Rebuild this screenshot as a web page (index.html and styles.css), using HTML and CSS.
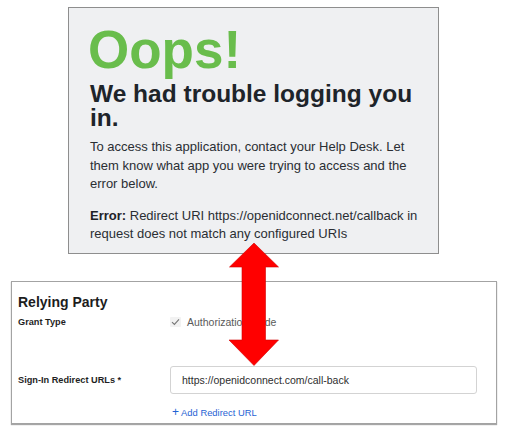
FILE: index.html
```html
<!DOCTYPE html>
<html lang="en">
<head>
<meta charset="utf-8">
<title>Redirect URI mismatch</title>
<link rel="stylesheet" href="styles.css">
</head>
<body>
<div class="page">
  <section class="error-box">
    <h1 class="oops">Oops!</h1>
    <h2 class="trouble">We had trouble logging you in.</h2>
    <p class="msg">To access this application, contact your Help Desk. Let them know what app you were trying to access and the error below.</p>
    <p class="msg err"><strong>Error:</strong> Redirect URI https://openidconnect.net/callback in request does not match any configured URIs</p>
  </section>

  <section class="panel">
    <h3 class="panel-title">Relying Party</h3>
    <div class="row row-grant">
      <div class="label">Grant Type</div>
      <div class="value check-value">
        <span class="checkbox"><svg width="9" height="8" viewBox="0 0 9 8"><path d="M1 4.2 L3.4 6.4 L8 1.4" fill="none" stroke="#777" stroke-width="1.1"/></svg></span>
        <span class="check-text">Authorization Code</span>
      </div>
    </div>
    <div class="row row-redirect">
      <div class="label">Sign-In Redirect URLs *</div>
      <div class="value"><div class="input">https://openidconnect.com/call-back</div></div>
    </div>
    <div class="row row-add">
      <div class="label"></div>
      <div class="value add-link"><span class="plus">+</span> Add Redirect URL</div>
    </div>
  </section>

  <svg class="arrow" width="512" height="439" viewBox="0 0 512 439">
    <polygon points="254,243 229.5,267 242,267 242,340 229,340 254,365.5 278.5,340 265.5,340 265.5,267 278.5,267" fill="#ff0000" stroke="#d00000" stroke-width="0.6"/>
  </svg>
</div>
</body>
</html>
```

FILE: styles.css
```css
html, body {
  margin: 0;
  padding: 0;
  background: #ffffff;
}

body {
  font-family: "Liberation Sans", Arial, Helvetica, sans-serif;
}

.page {
  position: relative;
  width: 512px;
  height: 439px;
  padding-top: 7px;
  box-sizing: border-box;
  overflow: hidden;
}

.error-box {
  margin-left: 68px;
  width: 371px;
  box-sizing: border-box;
  border: 1px solid #8e8e8e;
  background: #eff0f2;
  padding: 15px 14px 10px 21px;
}

.oops {
  margin: 0 0 6px -2px;
  font-size: 53px;
  line-height: 53px;
  font-weight: bold;
  color: #69bd4c;
}

.trouble {
  margin: 0 0 8.4px 0;
  font-size: 24.5px;
  line-height: 24px;
  font-weight: bold;
  color: #1e242a;
}

.msg {
  margin: 0;
  font-size: 13px;
  line-height: 18.3px;
  color: #2a2e33;
}

.msg.err {
  margin-top: 13.4px;
}

.msg strong {
  font-weight: bold;
  color: #1e2227;
}

.panel {
  margin: 27px 0 0 11px;
  width: 486px;
  box-sizing: border-box;
  border: 1px solid #a3a3a3;
  box-shadow: 0 1px 1px rgba(0, 0, 0, 0.35);
  background: #ffffff;
  padding: 12px 19px 5px 6px;
}

.panel-title {
  margin: 0 0 5px 0;
  font-size: 14px;
  line-height: 17px;
  font-weight: bold;
  color: #1d1d1d;
}

.row {
  display: flex;
  align-items: center;
}

.label {
  width: 152px;
  flex: none;
  font-size: 9.2px;
  font-weight: bold;
  color: #1f1f1f;
}

.value {
  flex: 1;
}

.row-grant {
  height: 12px;
}

.check-value {
  display: flex;
  align-items: center;
}

.checkbox {
  width: 11px;
  height: 10px;
  background: #f2f2f2;
  border-radius: 1px;
  display: flex;
  align-items: center;
  justify-content: center;
  margin-right: 6px;
}

.check-text {
  font-size: 10.5px;
  color: #5a5a5a;
}

.row-redirect {
  margin-top: 38px;
}

.input {
  height: 28px;
  box-sizing: border-box;
  border: 1px solid #d3d3d3;
  border-radius: 3px;
  padding-left: 11px;
  display: flex;
  align-items: center;
  font-size: 10.5px;
  color: #2e2e2e;
}

.row-add {
  margin-top: 12px;
  height: 12px;
}

.add-link {
  padding-left: 2px;
  font-size: 9.4px;
  color: #1f63d4;
}

.plus {
  font-size: 12px;
  line-height: 10px;
}

.arrow {
  position: absolute;
  left: 0;
  top: 0;
  pointer-events: none;
}
```
